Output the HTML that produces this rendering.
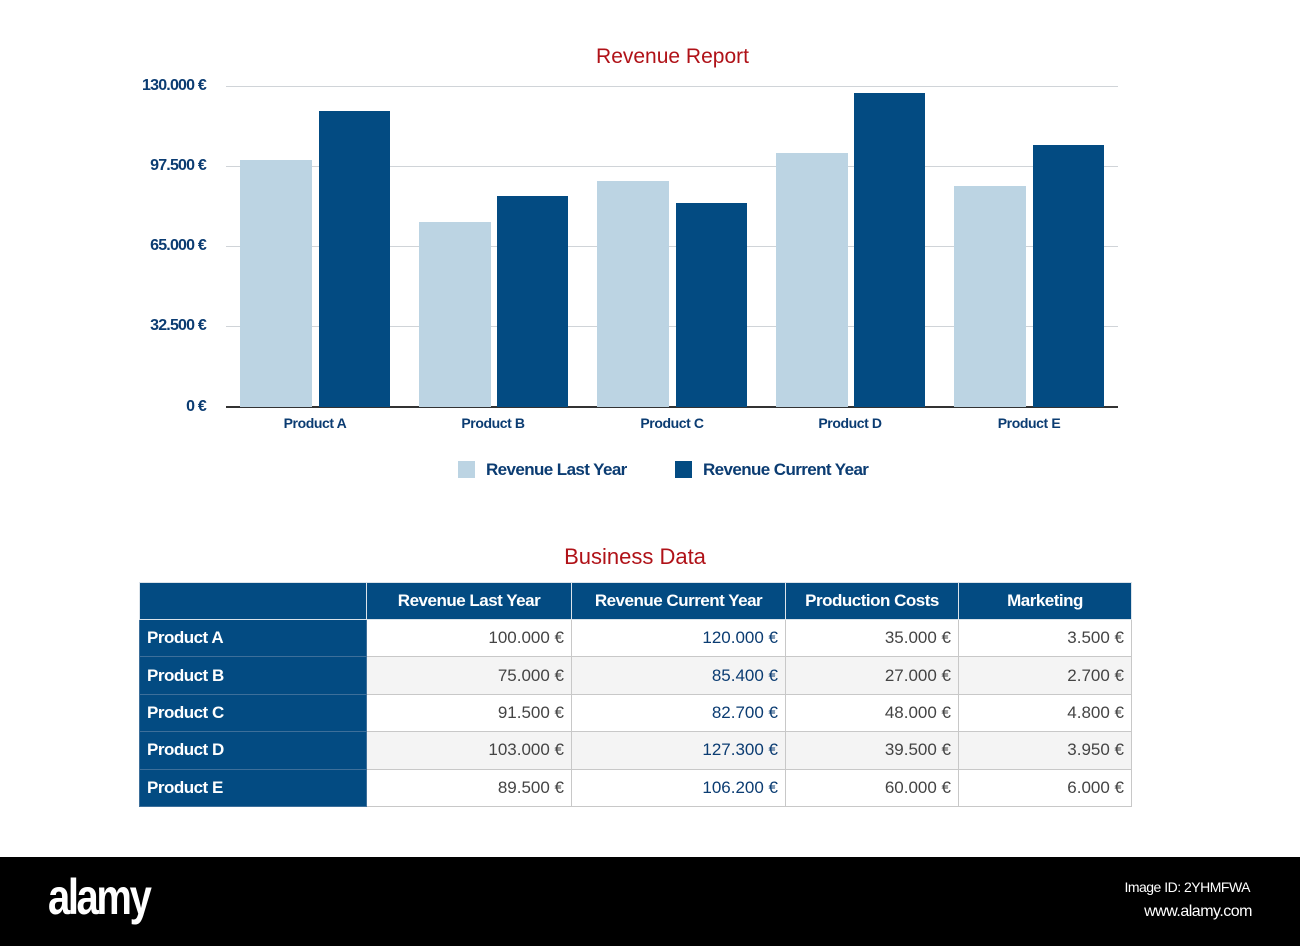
<!DOCTYPE html><html><head><meta charset="utf-8"><style>
body{margin:0;width:1300px;height:946px;background:#fff;position:relative;font-family:"Liberation Sans",sans-serif;overflow:hidden}
.a{position:absolute}
.g{position:absolute;left:226px;width:892px;height:1px;background:#d0d4d8}
.yl{position:absolute;right:1094px;font-size:16px;font-weight:bold;color:#0b3c72;letter-spacing:-0.8px}
.l{position:absolute;background:#bcd4e3;width:72px}
.d{position:absolute;background:#034b82;width:71px}
.x{position:absolute;top:415px;font-size:14px;font-weight:bold;color:#0b3c72;width:178px;text-align:center;letter-spacing:-0.4px}
table{position:absolute;left:139px;top:582px;border-collapse:collapse;font-size:17px;table-layout:fixed;width:992px}
td{border:1px solid #c8c8c8;height:37.4px;padding:0 7px;text-align:right;color:#444;box-sizing:border-box}
th{background:#034b82;color:#fff;height:34px;font-weight:bold;border:1px solid #dbe3ea;letter-spacing:-0.5px;font-size:17px}
td.h{background:#034b82;color:#fff;font-weight:bold;text-align:left;border:1px solid #3d6f9a;letter-spacing:-0.5px}
td.b{color:#0b3c72}
tr:nth-child(odd) td{background:#f4f4f4}
tr:nth-child(odd) td.h{background:#034b82}
</style></head><body>
<div class="a" style="left:0;width:1345px;top:45px;text-align:center;font-size:21px;color:#b01218">Revenue Report</div>
<div class="g" style="top:86px"></div><div class="g" style="top:166px"></div><div class="g" style="top:246px"></div><div class="g" style="top:326px"></div>
<div class="a" style="left:226px;top:406px;width:892px;height:2px;background:#333"></div>
<div class="yl" style="top:77px">130.000 €</div><div class="yl" style="top:157px">97.500 €</div><div class="yl" style="top:237px">65.000 €</div><div class="yl" style="top:317px">32.500 €</div><div class="yl" style="top:398px">0 €</div>
<div class="l" style="left:240px;top:160px;height:247px"></div><div class="d" style="left:319px;top:111px;height:296px"></div>
<div class="l" style="left:419px;top:222px;height:185px"></div><div class="d" style="left:497px;top:196px;height:211px"></div>
<div class="l" style="left:597px;top:181px;height:226px"></div><div class="d" style="left:676px;top:203px;height:204px"></div>
<div class="l" style="left:776px;top:153px;height:254px"></div><div class="d" style="left:854px;top:93px;height:314px"></div>
<div class="l" style="left:954px;top:186px;height:221px"></div><div class="d" style="left:1033px;top:145px;height:262px"></div>
<div class="x" style="left:226px">Product A</div><div class="x" style="left:404px">Product B</div><div class="x" style="left:583px">Product C</div><div class="x" style="left:761px">Product D</div><div class="x" style="left:940px">Product E</div>
<div class="a" style="left:458px;top:461px;width:17px;height:17px;background:#bcd4e3"></div>
<div class="a" style="left:486px;top:460px;font-size:17px;font-weight:bold;color:#0b3c72;letter-spacing:-0.6px">Revenue Last Year</div>
<div class="a" style="left:675px;top:461px;width:17px;height:17px;background:#034b82"></div>
<div class="a" style="left:703px;top:460px;font-size:17px;font-weight:bold;color:#0b3c72;letter-spacing:-0.6px">Revenue Current Year</div>
<div class="a" style="left:0;width:1270px;top:544px;text-align:center;font-size:22px;color:#b01218">Business Data</div>
<table>
<colgroup><col style="width:227px"><col style="width:205px"><col style="width:214px"><col style="width:173px"><col style="width:173px"></colgroup>
<tr><th style="background:#034b82"></th><th>Revenue Last Year</th><th>Revenue Current Year</th><th>Production Costs</th><th>Marketing</th></tr>
<tr><td class="h">Product A</td><td>100.000 €</td><td class="b">120.000 €</td><td>35.000 €</td><td>3.500 €</td></tr>
<tr><td class="h">Product B</td><td>75.000 €</td><td class="b">85.400 €</td><td>27.000 €</td><td>2.700 €</td></tr>
<tr><td class="h">Product C</td><td>91.500 €</td><td class="b">82.700 €</td><td>48.000 €</td><td>4.800 €</td></tr>
<tr><td class="h">Product D</td><td>103.000 €</td><td class="b">127.300 €</td><td>39.500 €</td><td>3.950 €</td></tr>
<tr><td class="h">Product E</td><td>89.500 €</td><td class="b">106.200 €</td><td>60.000 €</td><td>6.000 €</td></tr>
</table>
<div class="a" style="left:0;top:857px;width:1300px;height:89px;background:#000"></div>
<div class="a" style="left:48px;top:868px;font-size:50px;font-weight:bold;color:#fff;letter-spacing:-3px;transform:scaleX(0.8);transform-origin:left">alamy</div>
<div class="a" style="left:1050px;top:879px;font-size:14px;color:#fff;width:200px;text-align:right;white-space:nowrap;letter-spacing:-0.5px">Image ID: 2YHMFWA</div>
<div class="a" style="left:1050px;top:903px;font-size:16px;color:#fff;width:202px;text-align:right;white-space:nowrap;letter-spacing:-0.5px">www.alamy.com</div>
</body></html>
